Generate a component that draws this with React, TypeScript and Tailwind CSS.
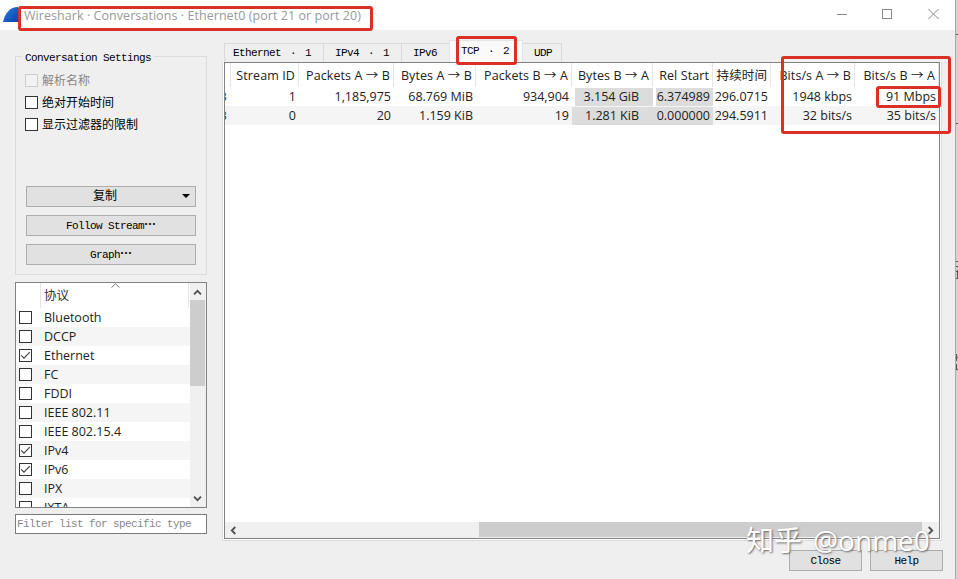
import type { ReactNode } from "react";
import clsx from "clsx";

const UI = "font-['Open_Sans','Noto_Sans_CJK_SC',sans-serif]";
const FIXED = "font-['Liberation_Mono','Noto_Sans_CJK_SC',monospace] text-[11px] tracking-[-0.6px]";

const protocols = [
  { name: "Bluetooth", checked: false },
  { name: "DCCP", checked: false },
  { name: "Ethernet", checked: true },
  { name: "FC", checked: false },
  { name: "FDDI", checked: false },
  { name: "IEEE 802.11", checked: false },
  { name: "IEEE 802.15.4", checked: false },
  { name: "IPv4", checked: true },
  { name: "IPv6", checked: true },
  { name: "IPX", checked: false },
  { name: "JXTA", checked: false },
];

const columns = [
  { title: "Stream ID", width: "w-[68px]", cells: ["1", "0"] },
  { title: "Packets A → B", width: "w-[95px]", cells: ["1,185,975", "20"] },
  { title: "Bytes A → B", width: "w-[82px]", cells: ["68.769 MiB", "1.159 KiB"] },
  { title: "Packets B → A", width: "w-[96px]", cells: ["934,904", "19"] },
  { title: "Bytes B → A", width: "w-[81px]", cells: ["3.154 GiB", "1.281 KiB"], bars: ["w-[78px]", "w-[81px]"] },
  { title: "Rel Start", width: "w-[60px]", cells: ["6.374989", "0.000000"], bars: ["w-[57px]", "w-[60px]"] },
  { title: "持续时间", width: "w-[58px]", cells: ["296.0715", "294.5911"] },
  { title: "Bits/s A → B", width: "w-[84px]", cells: ["1948 kbps", "32 bits/s"] },
  { title: "Bits/s B → A", width: "w-[84px]", cells: ["91 Mbps", "35 bits/s"] },
];

function Checkbox({ checked, disabled }: { checked?: boolean; disabled?: boolean }) {
  return (
    <span
      className={clsx(
        "block size-[13px] shrink-0 border",
        disabled ? "border-[#cccccc] bg-[#f3f3f3]" : "border-[#333333] bg-white"
      )}
    >
      {checked && (
        <svg viewBox="0 0 11 11" className="size-[11px]" fill="none" stroke="#444" strokeWidth="1.2">
          <path d="M1.2 5.3 4 8.2 9.8 2.2" />
        </svg>
      )}
    </span>
  );
}

function Button({ children, className }: { children: ReactNode; className?: string }) {
  return (
    <button
      className={clsx(
        "relative flex h-[21px] items-center justify-center border border-[#adadad] bg-[#e1e1e1] pt-px text-black",
        FIXED,
        className
      )}
    >
      {children}
    </button>
  );
}

function Chevron({ className }: { className?: string }) {
  return (
    <svg viewBox="0 0 9 9" className={clsx("size-[9px]", className)} fill="none" stroke="#505050" strokeWidth="1.8">
      <path d="M1 6.3 4.5 2.8 8 6.3" />
    </svg>
  );
}

function Tab({ label, count, className }: { label: string; count?: number; className: string }) {
  return (
    <div className={clsx("flex shrink-0 items-center text-black", FIXED, className)}>
      {label}
      {count && (
        <>
          <span className="w-[24px] text-center">·</span>
          {count}
        </>
      )}
    </div>
  );
}

function TitleBar() {
  return (
    <div className="flex h-[30px] shrink-0 items-start bg-white">
      <svg viewBox="0 0 15 15" className="mt-[7px] ml-[3px] h-[15px] w-[15px]">
        <defs>
          <linearGradient id="fin" x1="0" y1="0" x2="1" y2="1">
            <stop offset="0" stopColor="#2d7be0" />
            <stop offset="1" stopColor="#0843ae" />
          </linearGradient>
        </defs>
        <path d="M0 15C2 6 7 0 15 0V15Z" fill="url(#fin)" />
      </svg>
      <h1 className="mt-[7px] ml-[6px] text-[12.5px] leading-[18px] tracking-[0.06px] whitespace-nowrap text-[#999999]">
        Wireshark · Conversations · Ethernet0 (port 21 or port 20)
      </h1>
      <svg viewBox="0 0 104 12" className="mt-[8px] mr-[15px] ml-auto h-[12px] w-[104px]" fill="none" stroke="#888">
        <path d="M1 6.5H11" />
        <rect x="46.5" y="1.5" width="9" height="9" />
        <path d="m92.500 1 10 10M102.500 1l-10 10" />
      </svg>
    </div>
  );
}

function Settings() {
  return (
    <fieldset className="relative mt-[26px] h-[219px] border border-[#dcdcdc] pl-[9px]">
      <div className={clsx("absolute -top-[7px] left-[6px] bg-[#efefef] px-[3px] leading-[16px] text-black", FIXED)}>
        Conversation Settings
      </div>
      <div className="mt-[12px] flex flex-col text-[12px] text-black">
        <label className="flex h-[22px] items-center gap-[4px] text-[#888888]">
          <Checkbox disabled />
          <span className="pt-px">解析名称</span>
        </label>
        <label className="flex h-[22px] items-center gap-[4px]">
          <Checkbox />
          <span className="pt-px">绝对开始时间</span>
        </label>
        <label className="flex h-[22px] items-center gap-[4px]">
          <Checkbox />
          <span className="pt-px">显示过滤器的限制</span>
        </label>
      </div>
      <div className="mt-[51px] ml-px flex w-[170px] flex-col gap-[8px]">
        <Button className="pr-[12px]">
          <span className="text-[12px] tracking-normal">复制</span>
          <span className="absolute top-[7px] right-[5px] border-x-4 border-t-4 border-x-transparent border-t-black" />
        </Button>
        <Button>Follow Stream<span className="text-[12px] font-bold tracking-normal">⋯</span></Button>
        <Button>Graph<span className="text-[12px] font-bold tracking-normal">⋯</span></Button>
      </div>
    </fieldset>
  );
}

function ProtocolList() {
  return (
    <div className="mt-[7px] flex h-[226px] border border-[#828282] bg-white">
      <div className="relative min-w-0 flex-1 overflow-hidden">
        <svg viewBox="0 0 9 5" className="absolute top-0 left-[95px] h-[5px] w-[9px]" fill="none" stroke="#777">
          <path d="M.5 4.500 4.500.8 8.500 4.500" />
        </svg>
        <div className="mr-px flex h-[25px] border-r border-[#e5e5e5]">
          <div className="w-[25px] border-r border-[#e5e5e5]" />
          <div className="pl-[3px] text-[12.5px] leading-[25px] text-[#333]">协议</div>
        </div>
        {protocols.map((p, i) => (
          <div
            key={p.name}
            className={clsx("flex h-[19px] items-center gap-[12px] pl-[3px] text-[12.5px] text-[#222]", i % 2 === 1 && "bg-[#f5f5f5]")}
          >
            <Checkbox checked={p.checked} />
            <span className="pt-[2px]">{p.name}</span>
          </div>
        ))}
      </div>
      <div className="flex w-[16px] flex-col items-center bg-[#f0f0f0] pr-px">
        <Chevron className="mt-[5px] mb-[3px]" />
        <div className="h-[86px] w-[15px] bg-[#cdcdcd]" />
        <Chevron className="mt-auto mb-[4px] rotate-180" />
      </div>
    </div>
  );
}

function ConversationTable() {
  return (
    <div className="flex h-[477px] flex-col border border-[#828282] bg-white text-[12.5px] whitespace-nowrap text-[#222]">
      <div className="flex h-[24px]">
        <div className="w-[6px] border-r border-[#e5e5e5]" />
        {columns.map((c) => (
          <div
            key={c.title}
            className={clsx(
              "flex items-center justify-end border-r border-[#e5e5e5] pt-[3px] pr-[3px] tracking-[0.1px]",
              c.width
            )}
          >
            {c.title}
          </div>
        ))}
      </div>
      {[0, 1].map((row) => (
        <div key={row} className={clsx("flex h-[19px]", row === 1 && "bg-[#f5f5f5]")}>
          <div className="flex w-[6px] items-center justify-end overflow-hidden pt-[2px] pr-[4px] text-[#173f7a]">3</div>
          {columns.map((c) => (
            <div key={c.title} className={clsx("flex items-end justify-end", c.width)}>
              <div
                className={clsx(
                  "flex items-center justify-end",
                  c.bars ? ["h-[18px] bg-[#dcdcdc]", c.bars[row]] : "h-[19px] pt-[2px]",
                  c.title === "Bytes B → A" ? "pr-[14px]" : "pr-[3px]"
                )}
              >
                {c.cells[row]}
              </div>
            </div>
          ))}
        </div>
      ))}
      <div className="mt-auto flex h-[16px] items-center bg-[#f0f0f0]">
        <Chevron className="ml-[4px] -rotate-90" />
        <div className="mb-px ml-auto h-[15px] w-[443px] bg-[#cdcdcd]" />
        <Chevron className="mr-[4px] ml-[4px] rotate-90" />
      </div>
    </div>
  );
}

function Highlight({ className }: { className: string }) {
  return <div className={clsx("pointer-events-none absolute rounded-[3px] border-3 border-[#db3025]", className)} />;
}

export default function App() {
  return (
    <div className={clsx("relative flex h-[579px] w-[958px] overflow-hidden bg-[#d2d2d2]", UI)}>
      <div className="flex w-[956px] shrink-0 flex-col border-r border-[#aaa] bg-[#efefef]">
        <TitleBar />
        <div className="flex min-h-0 flex-1">
          <aside className="ml-[15px] flex w-[192px] shrink-0 flex-col">
            <Settings />
            <ProtocolList />
            <input
              className={clsx("mt-[6px] h-[20px] border border-[#7a7a7a] bg-white px-px placeholder:text-[#888]", FIXED)}
              placeholder="Filter list for specific type"
            />
          </aside>
          <main className="ml-[15px] flex w-[720px] shrink-0 flex-col">
            <div className="flex h-[32px] items-end pl-[2px]">
              <Tab label="Ethernet" count={1} className="h-[19px] w-[100px] border border-b-0 border-[#d9d9d9] pl-[8px]" />
              <Tab label="IPv4" count={1} className="h-[19px] w-[78px] border-t border-r border-[#d9d9d9] pl-[11px]" />
              <Tab label="IPv6" className="h-[19px] w-[47px] border-t border-[#d9d9d9] pl-[11px]" />
              <Tab label="TCP" count={2} className="h-[22px] w-[74px] border border-b-0 border-[#e4e4e4] bg-[#fafafa] pb-px pl-[11px]" />
              <Tab label="UDP" className="h-[19px] w-[39px] border border-b-0 border-l-0 border-[#d9d9d9] pl-[11px]" />
            </div>
            <div className="border border-t-0 border-[#dcdcdc] bg-white px-px pb-px">
              <ConversationTable />
            </div>
            <div className="-mr-px mt-[9px] flex justify-end gap-[8px]">
              <Button className="w-[73px]">Close</Button>
              <Button className="w-[73px]">Help</Button>
            </div>
          </main>
        </div>
      </div>

      {/* edge of the window behind */}
      <svg viewBox="0 0 2 579" className="h-[579px] w-[2px]" stroke="#555" fill="none">
        <path d="M0 34.500H2M0 123.500H2M0 261.500H2M0 266.500H2M0 271.500H2M0 278.500H2M1.500 270V279M0 357.500H2M.5 354V361M.5 364V370M0 369.500H2" />
      </svg>

      <div className="absolute top-[520px] left-[746px] flex gap-[11px] text-[28px] leading-[40px] whitespace-nowrap text-white [text-shadow:1px_1px_2px_#666]">
        <span>知乎</span>
        <span>@onme0</span>
      </div>

      <Highlight className="top-[6px] left-[18px] h-[25px] w-[355px]" />
      <Highlight className="top-[36px] left-[456px] h-[29px] w-[61px]" />
      <Highlight className="top-[56px] left-[781px] h-[78px] w-[170px]" />
      <Highlight className="top-[86px] left-[876px] h-[22px] w-[65px]" />
    </div>
  );
}
